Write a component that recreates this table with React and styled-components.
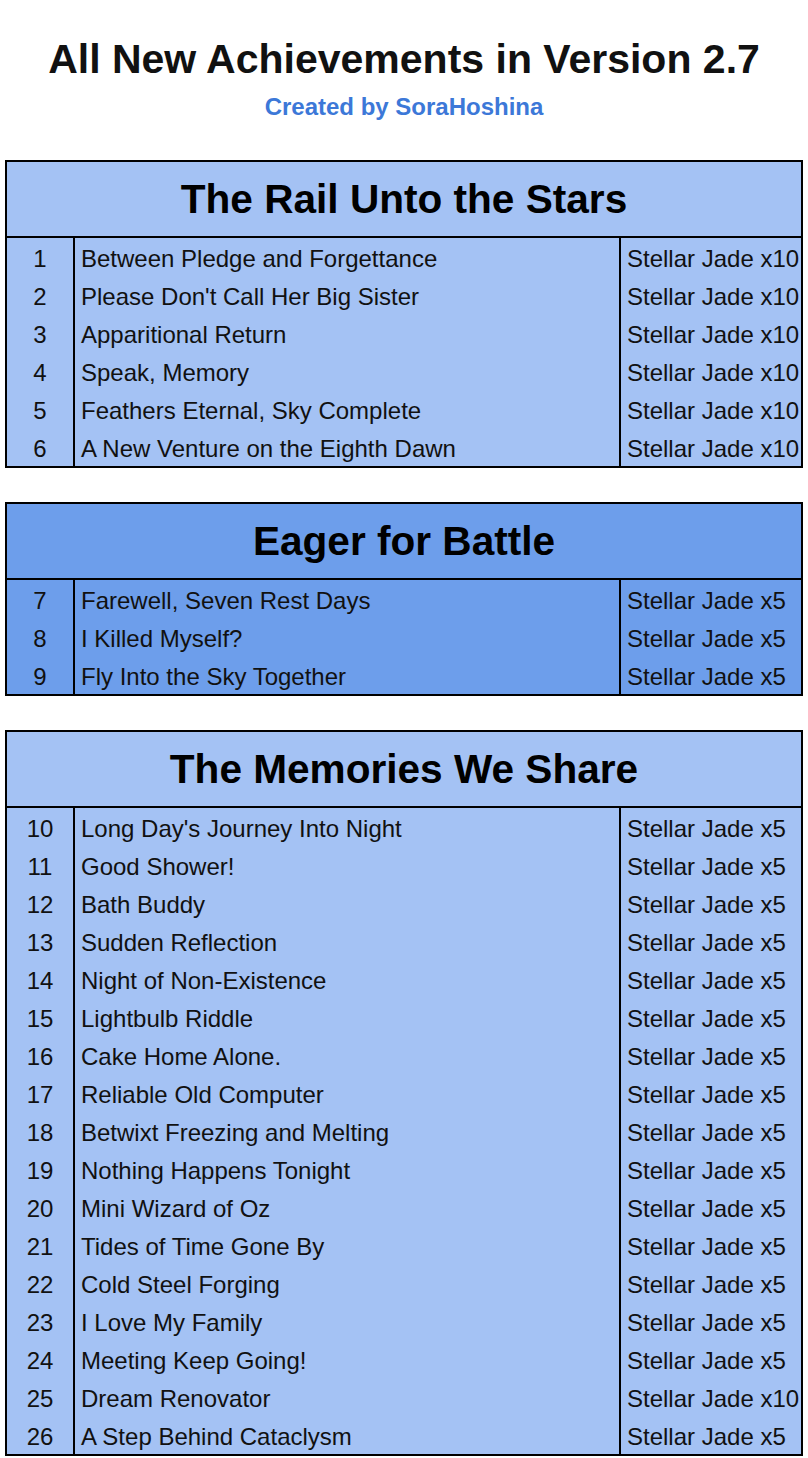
import React from "react";
import styled, { createGlobalStyle } from "styled-components";

const Global = createGlobalStyle`
  html, body { margin: 0; padding: 0; background: #ffffff; }
  body { font-family: "Liberation Sans", Arial, sans-serif; color: #111111; }
`;

const Page = styled.div`
  width: 808px;
  padding: 36px 5px 0;
  box-sizing: border-box;
  display: flex;
  flex-direction: column;
`;

const Title = styled.h1`
  margin: 0;
  font-size: 41px;
  line-height: 46px;
  font-weight: 700;
  text-align: center;
  color: #111111;
`;

const Subtitle = styled.div`
  margin-top: 11px;
  font-size: 24px;
  line-height: 28px;
  font-weight: 700;
  text-align: center;
  color: #3c78d8;
`;

const Tables = styled.div`
  margin-top: 39px;
  display: flex;
  flex-direction: column;
  gap: 34px;
`;

const Table = styled.section`
  border: 2px solid #000000;
  background: ${(p) => p.$bg};
`;

const Header = styled.h2`
  margin: 0;
  height: 73px;
  padding-top: 1px;
  box-sizing: content-box;
  display: flex;
  align-items: center;
  justify-content: center;
  font-size: 40.6px;
  font-weight: 700;
  color: #000000;
  border-bottom: 2px solid #000000;
`;

const Row = styled.div`
  display: grid;
  grid-template-columns: 68px 546px 1fr;
  height: 38px;
  font-size: 24px;
  color: #111111;
`;

const Cell = styled.div`
  display: flex;
  align-items: center;
  justify-content: ${(p) => (p.$center ? "center" : "flex-start")};
  padding: ${(p) => (p.$center ? "4px 0 0" : "4px 0 0 6px")};
  border-right: ${(p) => (p.$last ? "none" : "2px solid #000000")};
  white-space: nowrap;
  overflow: hidden;
`;

const sections = [
  {
    title: "The Rail Unto the Stars",
    bg: "#a4c2f4",
    rows: [
      [1, "Between Pledge and Forgettance", "Stellar Jade x10"],
      [2, "Please Don't Call Her Big Sister", "Stellar Jade x10"],
      [3, "Apparitional Return", "Stellar Jade x10"],
      [4, "Speak, Memory", "Stellar Jade x10"],
      [5, "Feathers Eternal, Sky Complete", "Stellar Jade x10"],
      [6, "A New Venture on the Eighth Dawn", "Stellar Jade x10"],
    ],
  },
  {
    title: "Eager for Battle",
    bg: "#6d9eeb",
    rows: [
      [7, "Farewell, Seven Rest Days", "Stellar Jade x5"],
      [8, "I Killed Myself?", "Stellar Jade x5"],
      [9, "Fly Into the Sky Together", "Stellar Jade x5"],
    ],
  },
  {
    title: "The Memories We Share",
    bg: "#a4c2f4",
    rows: [
      [10, "Long Day's Journey Into Night", "Stellar Jade x5"],
      [11, "Good Shower!", "Stellar Jade x5"],
      [12, "Bath Buddy", "Stellar Jade x5"],
      [13, "Sudden Reflection", "Stellar Jade x5"],
      [14, "Night of Non-Existence", "Stellar Jade x5"],
      [15, "Lightbulb Riddle", "Stellar Jade x5"],
      [16, "Cake Home Alone.", "Stellar Jade x5"],
      [17, "Reliable Old Computer", "Stellar Jade x5"],
      [18, "Betwixt Freezing and Melting", "Stellar Jade x5"],
      [19, "Nothing Happens Tonight", "Stellar Jade x5"],
      [20, "Mini Wizard of Oz", "Stellar Jade x5"],
      [21, "Tides of Time Gone By", "Stellar Jade x5"],
      [22, "Cold Steel Forging", "Stellar Jade x5"],
      [23, "I Love My Family", "Stellar Jade x5"],
      [24, "Meeting Keep Going!", "Stellar Jade x5"],
      [25, "Dream Renovator", "Stellar Jade x10"],
      [26, "A Step Behind Cataclysm", "Stellar Jade x5"],
    ],
  },
];

export default function App() {
  return (
    <>
      <Global />
      <Page>
        <Title>All New Achievements in Version 2.7</Title>
        <Subtitle>Created by SoraHoshina</Subtitle>
        <Tables>
          {sections.map((s) => (
            <Table key={s.title} $bg={s.bg}>
              <Header>{s.title}</Header>
              {s.rows.map(([n, name, reward]) => (
                <Row key={n}>
                  <Cell $center>{n}</Cell>
                  <Cell>{name}</Cell>
                  <Cell $last>{reward}</Cell>
                </Row>
              ))}
            </Table>
          ))}
        </Tables>
      </Page>
    </>
  );
}
